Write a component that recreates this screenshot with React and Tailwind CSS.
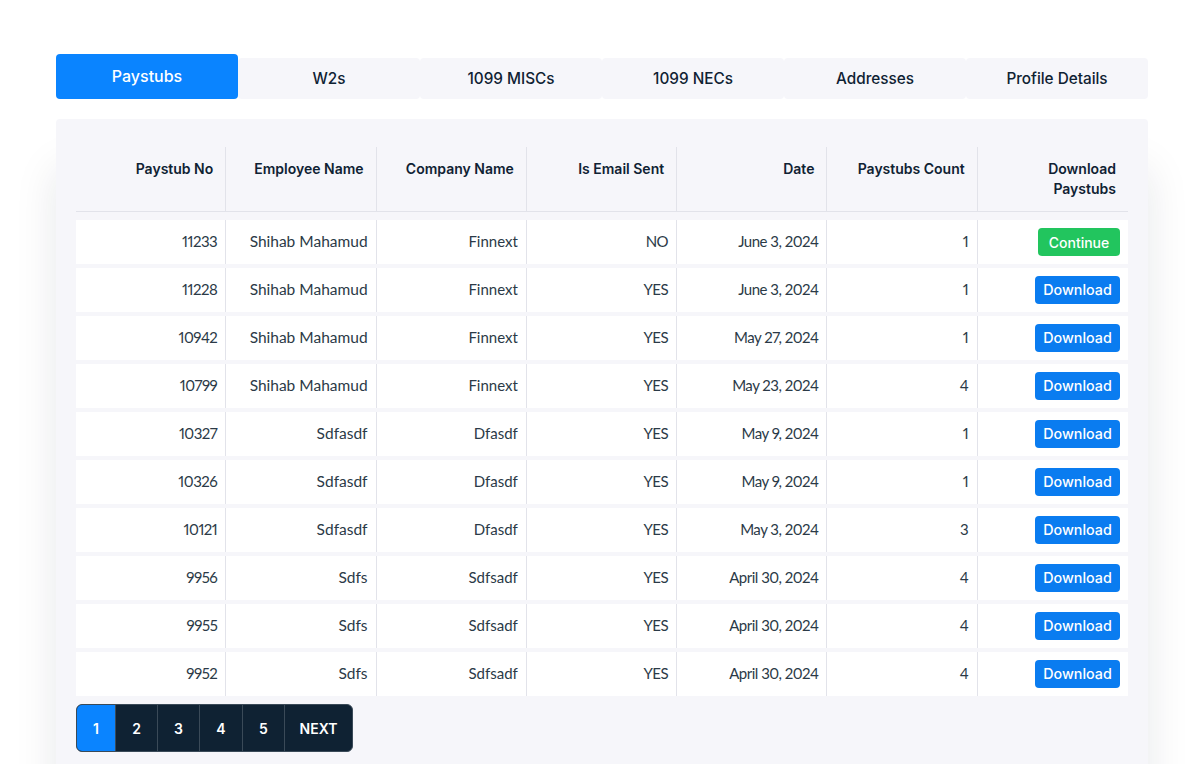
import React from 'react';

const tabs = ['Paystubs', 'W2s', '1099 MISCs', '1099 NECs', 'Addresses', 'Profile Details'];

const headers = ['Paystub No', 'Employee Name', 'Company Name', 'Is Email Sent', 'Date', 'Paystubs Count'];

// number columns run narrower than the name columns in the picture
const cellSizes = [
  'text-[15px] tracking-[-0.5px] pb-[1px]',
  'text-[15.5px]',
  'text-[15px] pb-[1px]',
  'text-[15px] tracking-[-0.5px] pb-[1px]',
  'text-[15px] tracking-[-0.5px] pb-[1px]',
  'text-[15px] pb-[1px]',
];

const rows = [
  ['11233', 'Shihab Mahamud', 'Finnext', 'NO', 'June 3, 2024', '1', true],
  ['11228', 'Shihab Mahamud', 'Finnext', 'YES', 'June 3, 2024', '1'],
  ['10942', 'Shihab Mahamud', 'Finnext', 'YES', 'May 27, 2024', '1'],
  ['10799', 'Shihab Mahamud', 'Finnext', 'YES', 'May 23, 2024', '4'],
  ['10327', 'Sdfasdf', 'Dfasdf', 'YES', 'May 9, 2024', '1'],
  ['10326', 'Sdfasdf', 'Dfasdf', 'YES', 'May 9, 2024', '1'],
  ['10121', 'Sdfasdf', 'Dfasdf', 'YES', 'May 3, 2024', '3'],
  ['9956', 'Sdfs', 'Sdfsadf', 'YES', 'April 30, 2024', '4'],
  ['9955', 'Sdfs', 'Sdfsadf', 'YES', 'April 30, 2024', '4'],
  ['9952', 'Sdfs', 'Sdfsadf', 'YES', 'April 30, 2024', '4'],
];

const pages = [
  { label: '1', w: 'w-[38px]' },
  { label: '2', w: 'w-[42px]' },
  { label: '3', w: 'w-[42px]' },
  { label: '4', w: 'w-[43px]' },
  { label: '5', w: 'w-[42px]' },
  { label: 'NEXT', w: 'w-[68px]' },
];

export default function App() {
  return (
    <div className="isolate h-[764px] overflow-hidden bg-white px-[56px] pt-[54px] font-['Inter',sans-serif] text-[#0f2233]">
      <div className="grid grid-cols-6 items-end">
        {tabs.map((tab, i) =>
          i === 0 ? (
            <button key={tab} className="flex h-[45px] items-start justify-center rounded-[4px] bg-[#0a84ff] pt-[11px] text-[16px] leading-[22px] font-medium text-white">
              {tab}
            </button>
          ) : (
            <button key={tab} className="flex h-[41px] items-center justify-center rounded-[4px] bg-[#f6f6fa] pt-[1px] text-[15.3px] font-medium text-[#0f2233]">
              {tab}
            </button>
          )
        )}
      </div>

      <div className="relative mt-[20px] h-[700px] rounded-[4px] bg-[#f6f6fa] px-[20px] pt-[28px]">
        <div className="absolute inset-x-0 top-[40px] bottom-0 -z-10 shadow-[0_10px_40px_rgba(15,34,51,0.1)]" />

        <div className="grid h-[65px] grid-cols-7 border-b border-[#e2e3ea]">
          {headers.map((h) => (
            <div key={h} className="border-r border-[#e2e3ea] pt-[12px] pr-[12px] text-right text-[14px] leading-[20px] font-semibold">
              {h}
            </div>
          ))}
          <div className="pt-[12px] pr-[12px] pl-[40px] text-right text-[14px] leading-[20px] font-semibold">
            Download Paystubs
          </div>
        </div>

        <div className="mt-[8px] flex flex-col gap-[4px]">
          {rows.map((row) => (
            <div key={row[0]} className="grid h-[44px] grid-cols-7 bg-white">
              {row.slice(0, 6).map((cell, i) => (
                <div key={i} className={`flex items-center justify-end border-r border-[#e2e3ea] pr-[8px] font-['Lato',sans-serif] text-[#2b3a47] proportional-nums ${cellSizes[i]}`}>
                  {cell}
                </div>
              ))}
              <div className="flex items-center justify-end pr-[8px]">
                {row[6] ? (
                  <button className="h-[28px] w-[82px] rounded-[4px] bg-[#22c55e] text-[14px] font-medium text-white">Continue</button>
                ) : (
                  <button className="h-[28px] w-[85px] rounded-[4px] bg-[#0a7cf0] text-[14.3px] font-medium text-white">Download</button>
                )}
              </div>
            </div>
          ))}
        </div>

        <div className="mt-[8px] flex h-[48px] w-[277px] overflow-hidden rounded-[6px] border border-[#3a4a58] bg-[#0f2233]">
          {pages.map((p, i) => (
            <div
              key={p.label}
              className={`flex items-center justify-center text-[14px] font-semibold text-white ${p.w} ${i === 0 ? 'bg-[#0a84ff]' : 'border-l border-[#3a4a58]'}`}
            >
              {p.label}
            </div>
          ))}
        </div>
      </div>
    </div>
  );
}
